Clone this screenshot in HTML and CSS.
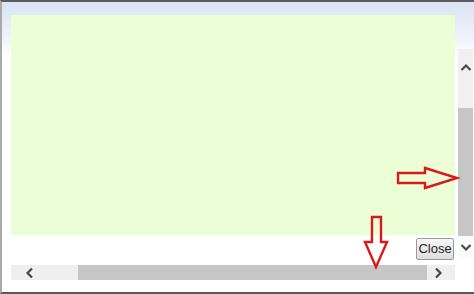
FILE: index.html
```html
<!DOCTYPE html>
<html lang="en">
<head>
<meta charset="utf-8">
<title>Dialog</title>
<link rel="stylesheet" href="styles.css">
</head>
<body>
<div class="frame">
  <div class="main">
    <div class="panel"></div>
    <div class="actions">
      <button class="close-btn">Close</button>
    </div>
    <div class="hscroll">
      <div class="h-btn h-left">
        <svg width="10" height="12" viewBox="0 0 10 12"><path d="M7 1.5 L2.5 6 L7 10.5" fill="none" stroke="#4a4a4a" stroke-width="2.2"/></svg>
      </div>
      <div class="h-thumb"></div>
      <div class="h-btn h-right">
        <svg width="10" height="12" viewBox="0 0 10 12"><path d="M3 1.5 L7.5 6 L3 10.5" fill="none" stroke="#4a4a4a" stroke-width="2.2"/></svg>
      </div>
    </div>
  </div>
  <div class="vscroll">
    <div class="v-btn v-up">
      <svg width="12" height="10" viewBox="0 0 12 10"><path d="M1.5 7 L6 2.5 L10.5 7" fill="none" stroke="#4a4a4a" stroke-width="2.2"/></svg>
    </div>
    <div class="v-thumb"></div>
    <div class="v-btn v-down">
      <svg width="12" height="10" viewBox="0 0 12 10"><path d="M1.5 3 L6 7.5 L10.5 3" fill="none" stroke="#4a4a4a" stroke-width="2.2"/></svg>
    </div>
  </div>
  <svg class="annotations" width="474" height="294" viewBox="0 0 474 294">
    <polygon points="398,173 425,173 425,168 457,178 425,188 425,183 398,183" fill="none" stroke="#d9191c" stroke-width="2.4"/>
    <polygon points="372,217 381,217 381,242 387,242 376,267 365,242 372,242" fill="none" stroke="#d9191c" stroke-width="2.4"/>
  </svg>
</div>
</body>
</html>
```
FILE: styles.css
```css
html, body {
  margin: 0;
  padding: 0;
  background: #ffffff;
}

.frame {
  position: relative;
  box-sizing: border-box;
  width: 474px;
  height: 294px;
  display: flex;
  align-items: flex-start;
  padding: 13px 0 0 9px;
  border-top: 2px solid #5b5b5b;
  border-bottom: 2px solid #5b5b5b;
  border-left: 2px solid #a9a9a9;
  background: linear-gradient(#dbe4f4, #eef2fa 35px, #ffffff 55px);
  font-family: "Liberation Sans", Arial, sans-serif;
  overflow: hidden;
}

.main {
  width: 444px;
  display: flex;
  flex-direction: column;
}

.panel {
  height: 220px;
  background: #ecfed6;
}

.actions {
  height: 30px;
  box-sizing: border-box;
  padding-top: 3px;
  display: flex;
  justify-content: flex-end;
  align-items: flex-start;
}

.close-btn {
  width: 38px;
  height: 22px;
  margin: 0 1px 0 0;
  padding: 0;
  box-sizing: border-box;
  border: 1px solid #9a9a9a;
  border-radius: 2px;
  background: linear-gradient(#f7f7f7, #dedede);
  color: #1e1e1e;
  font-family: "Liberation Sans", Arial, sans-serif;
  font-size: 13px;
  line-height: 20px;
}

.hscroll {
  height: 15px;
  display: flex;
  background: #efefef;
}

.h-btn {
  display: flex;
  align-items: center;
  justify-content: center;
}

.h-left {
  width: 67px;
  justify-content: flex-start;
  padding-left: 14px;
  box-sizing: border-box;
}

.h-thumb {
  width: 349px;
  background: #c6c6c6;
}

.h-right {
  width: 28px;
  justify-content: flex-start;
  padding-left: 6px;
  box-sizing: border-box;
}

.vscroll {
  margin: 34px 0 0 3px;
  width: 15px;
  height: 209px;
  display: flex;
  flex-direction: column;
}

.v-btn {
  display: flex;
  justify-content: center;
}

.v-up {
  height: 59px;
  align-items: flex-start;
  padding-top: 14px;
  box-sizing: border-box;
  background: #f0f0f2;
}

.v-thumb {
  height: 128px;
  background: #c6c6c6;
}

.v-down {
  height: 22px;
  align-items: center;
  background: #fbfbfb;
}

.annotations {
  position: absolute;
  left: -2px;
  top: -2px;
  pointer-events: none;
}
```
